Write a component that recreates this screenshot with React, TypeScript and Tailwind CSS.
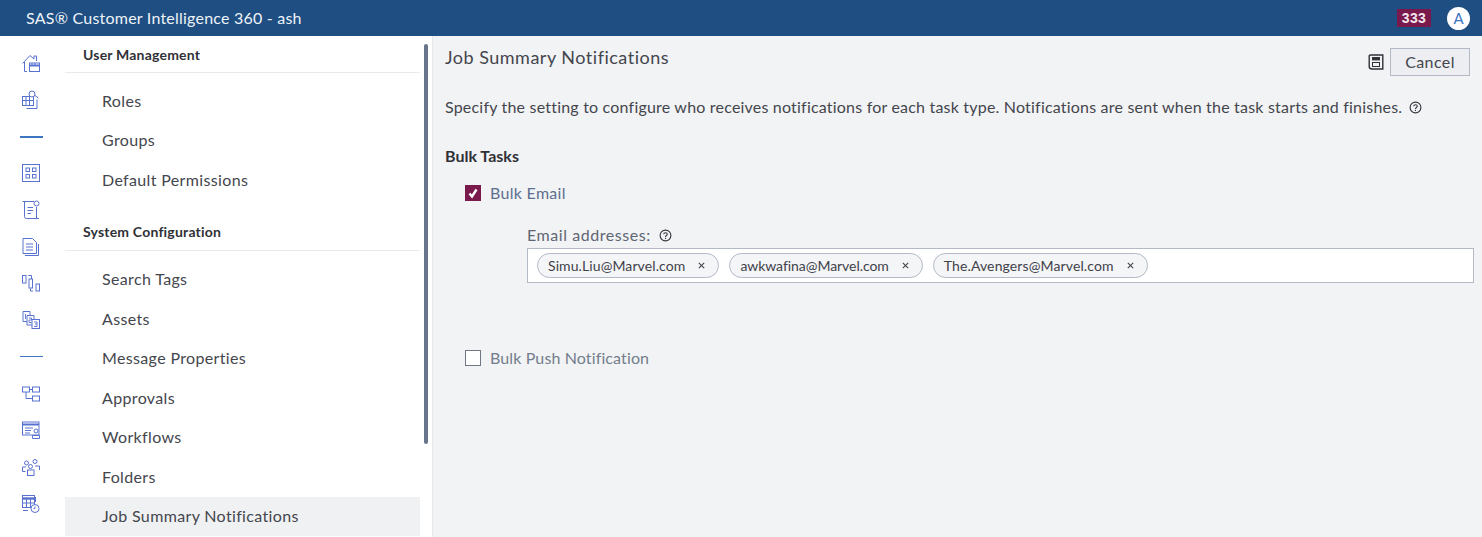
import React from "react";

const font = { fontFamily: '"Lato", "Noto Sans", sans-serif' };

function Ico({ children }: { children: React.ReactNode }) {
  return (
    <svg width="20" height="20" viewBox="0 0 20 20" fill="none" stroke="#5a72cf" strokeWidth="1" className="block">
      {children}
    </svg>
  );
}

const icons: React.ReactNode[] = [
  <Ico><path d="M1.5 10.5 L9 2.5 L13 6 V3 H15.5 V8" /><path d="M3.5 9 V18.5 H6" /><rect x="8.5" y="10" width="10" height="8.5" /><path d="M8.5 12.5 H18.5" strokeWidth="2" /><path d="M11 12.5 V10 M14 12.5 V10" /></Ico>,
  <Ico><rect x="1.5" y="6.5" width="11" height="9" /><path d="M5 6.5 V15.5 M8.5 6.5 V15.5 M1.5 10.5 H12.5" /><circle cx="11" cy="4" r="3" fill="#fff" /><path d="M14 5.5 L17.5 8 M16 9.5 V18.5 H5.5" /></Ico>,
  null,
  <Ico><rect x="1.5" y="1.5" width="17" height="17" /><rect x="5" y="5" width="3.5" height="3.5" /><rect x="11.5" y="5" width="3.5" height="3.5" /><rect x="5" y="11.5" width="3.5" height="3.5" /><rect x="11.5" y="11.5" width="3.5" height="3.5" /></Ico>,
  <Ico><path d="M1.5 1.5 H13 M3.5 1.5 V16.5 Q3.5 18.5 5.5 18.5 H18" /><path d="M15.5 7 V18" /><circle cx="15.5" cy="3.5" r="2.5" /><path d="M6.5 7.5 H12 M6.5 10.5 H12 M6.5 13.5 H10" /></Ico>,
  <Ico><path d="M2 1.5 H11.5 L15.5 5.5 V16.5 H2 Z" /><path d="M5 7 H12 M5 10 H12 M5 13 H12" /><path d="M4 18.5 H17.5 V7" /></Ico>,
  <Ico><rect x="1.5" y="2.5" width="3.5" height="7.5" /><path d="M7.5 2.5 H10.5 V6 M7.5 2.5 V3" /><rect x="8" y="6" width="3.5" height="9" /><rect x="15" y="11" width="3.5" height="7" /><path d="M9.5 18 H12 M9.5 15.5 V18" /></Ico>,
  <Ico><path d="M2 1.5 H9 V5.5 M2 1.5 V11.5 H6" /><path d="M6 5.5 H13 V9.5 M6 5.5 V15 H11" /><rect x="11" y="9.5" width="7.5" height="9" /><path d="M4.5 4 V9 M8 8 H10.5 V10 H8 V12.5 H10.5 M13 12 H16 V14 H14 M16 14 V16.5 H13" strokeWidth="0.9" /></Ico>,
  null,
  <Ico><rect x="1.5" y="3" width="7" height="5" /><rect x="11.5" y="3" width="7" height="5" /><rect x="11.5" y="12" width="7" height="5" /><path d="M8.5 5.5 H11.5 M5 8 V14.5 H11.5" /></Ico>,
  <Ico><rect x="1.5" y="2" width="16.5" height="13" /><path d="M1.5 4.5 H18" strokeWidth="2" /><path d="M4 8 H12 M4 10.5 H10 M4 13 H9" /><circle cx="15" cy="11" r="2" fill="#fff" /><path d="M11.5 18.5 V15.5 H18.5 V18.5 Z" fill="#fff" /></Ico>,
  <Ico><circle cx="5.5" cy="6" r="2" /><circle cx="14" cy="4.5" r="2" /><circle cx="9.5" cy="9.5" r="2" /><path d="M1.5 14.5 V10 H5 M18.5 13 V9 H14 M1.5 14.5 H4.5" /><rect x="6.5" y="13" width="6.5" height="5.5" /></Ico>,
  <Ico><rect x="1.5" y="1.5" width="12" height="12" /><path d="M1.5 4.5 H13.5" strokeWidth="2.4" /><path d="M5.5 4.5 V13.5 M9.5 4.5 V13.5 M1.5 9 H13.5" /><circle cx="14" cy="14.5" r="4" fill="#fff" /><path d="M14 12.5 V14.5 H12.5 M14.5 3 V8 M2 16.5 H7" /></Ico>,
];

function RailItem({ icon, index }: { icon: React.ReactNode; index: number }) {
  if (icon === null) {
    return (
      <div className="h-[36.7px] flex items-center justify-center">
        <div className={`w-[23px] bg-[#3c76c0] ${index === 2 ? "h-[2px]" : "h-px"}`} />
      </div>
    );
  }
  return <div className="h-[36.7px] flex items-center justify-center">{icon}</div>;
}

function NavItem({ label, active }: { label: string; active?: boolean }) {
  return (
    <div className={`h-[39.5px] pl-[37px] flex items-center text-[16px] tracking-[0.35px] text-[#44464d] ${active ? "bg-[#f0f1f3]" : ""}`}>
      {label}
    </div>
  );
}

function NavHeading({ label }: { label: string }) {
  return (
    <div className="h-[35px] pl-[18px] pb-[2px] flex items-center border-b border-[#e9eaed] text-[14px] tracking-[0.2px] font-bold text-[#2f3137]">
      {label}
    </div>
  );
}

function Help({ className }: { className?: string }) {
  return (
    <svg width="13" height="13" viewBox="0 0 13 13" fill="none" stroke="#33363d" strokeWidth="1.1" className={className}>
      <circle cx="6.5" cy="6.5" r="5.4" />
      <path d="M4.7 5.2 C4.7 3.2 8.3 3.2 8.3 5.2 C8.3 6.5 6.5 6.4 6.5 7.9" />
      <path d="M6.5 8.8 V10" />
    </svg>
  );
}

function Chip({ label, tracking }: { label: string; tracking: string }) {
  return (
    <div className={`h-[25px] flex items-center rounded-full border border-[#b3b9c6] bg-[#f4f5f7] pl-[10px] pr-[13px] text-[14px] text-[#3f424a] ${tracking}`}>
      <span>{label}</span>
      <span className="ml-[13px] text-[#44464d]">
        <svg width="7" height="7" viewBox="0 0 7 7" stroke="currentColor" strokeWidth="1.1"><path d="M.8.8 6.2 6.2M6.2.8.8 6.2" /></svg>
      </span>
    </div>
  );
}

export default function App() {
  return (
    <div style={font} className="h-[537px] w-[1482px] overflow-hidden flex flex-col bg-white">
      <header className="h-9 shrink-0 bg-[#1e4e82] flex items-center pl-[26px] pr-3 text-white">
        <span className="text-[16px] tracking-[0.22px] text-[#eef3f8]">SAS® Customer Intelligence 360 - ash</span>
        <div className="ml-auto flex items-center">
          <span className="h-[18px] w-[34px] bg-[#7a1a4c] flex items-center justify-center text-[14px] font-bold tracking-[0.3px] text-[#f3e6ee]" style={{ fontFamily: '"Liberation Sans", sans-serif' }}>333</span>
          <span className="ml-4 w-[23px] h-[23px] rounded-full bg-white text-[#3d74c4] flex items-center justify-center text-[15px]">A</span>
        </div>
      </header>
      <div className="flex flex-1 min-h-0">
        <aside className="w-[65px] shrink-0 pt-[9px] pr-[3px]">
          {icons.map((ic, i) => (
            <RailItem key={i} icon={ic} index={i} />
          ))}
        </aside>
        <nav className="relative w-[367px] shrink-0 pr-3 pt-[2px]">
          <div className="w-[355px]">
            <NavHeading label="User Management" />
            <div className="pt-[8px]">
              <NavItem label="Roles" />
              <NavItem label="Groups" />
              <NavItem label="Default Permissions" />
            </div>
            <div className="mt-[16px]">
              <NavHeading label="System Configuration" />
            </div>
            <div className="pt-[9px]">
              <NavItem label="Search Tags" />
              <NavItem label="Assets" />
              <NavItem label="Message Properties" />
              <NavItem label="Approvals" />
              <NavItem label="Workflows" />
              <NavItem label="Folders" />
              <NavItem label="Job Summary Notifications" active />
            </div>
          </div>
          <div className="absolute left-[359px] top-[8px] w-1 h-[400px] bg-[#68758a] rounded-sm" />
        </nav>
        <main className="flex-1 min-w-0 bg-[#f2f3f5] border-l border-[#e7e8ec] pl-[12px] pr-3">
          <div className="flex items-start justify-between pt-[10px]">
            <h1 className="text-[18px] leading-6 -mt-px tracking-[0.5px] text-[#44464d]">Job Summary Notifications</h1>
            <div className="flex items-center pt-[2px]">
              <svg width="16" height="16" viewBox="0 0 16 16" fill="none" className="mr-[6px]">
                <path d="M1.2 2.2 Q1.2 1 2.4 1 H14.8 V15 H4 Q1.2 15 1.2 12.5 Z" stroke="#2f3238" strokeWidth="1.4" />
                <rect x="4" y="3" width="8" height="3.4" fill="#2f3238" />
                <rect x="4.5" y="8.5" width="7" height="4" stroke="#2f3238" strokeWidth="1" />
              </svg>
              <button className="w-[80px] h-7 border border-[#b3b9c6] bg-[#eceef2] text-[16px] tracking-[0.4px] text-[#44464d]">Cancel</button>
            </div>
          </div>
          <p className="mt-[21px] flex items-center h-5 text-[16px] tracking-[0.2px] text-[#44464d]">
            Specify the setting to configure who receives notifications for each task type. Notifications are sent when the task starts and finishes.
            <Help className="ml-[7px]" />
          </p>
          <h2 className="mt-[29px] h-5 flex items-center text-[16px] font-bold text-[#2f3137]">Bulk Tasks</h2>
          <label className="mt-[17px] ml-[20px] h-5 flex items-center">
            <span className="w-4 h-4 bg-[#7a1a4c] flex items-center justify-center">
              <svg width="12" height="12" viewBox="0 0 12 12" fill="none" stroke="#fff" strokeWidth="2.4"><path d="M2.5 6.5 L5 9.5 L9.5 2.5" /></svg>
            </span>
            <span className="ml-[9px] text-[16px] tracking-[0.3px] text-[#5c6f8e]">Bulk Email</span>
          </label>
          <div className="ml-[82px] mt-[22px]">
            <div className="h-5 flex items-center text-[16px] tracking-[0.55px] text-[#5e6673]">
              Email addresses:
              <Help className="ml-[8px]" />
            </div>
            <div className="mt-[3px] w-[947px] h-[35px] border border-[#b3b9c6] bg-white flex items-center gap-[10px] pl-[9px]">
              <Chip label="Simu.Liu@Marvel.com" tracking="tracking-[0.1px]" />
              <Chip label="awkwafina@Marvel.com" tracking="tracking-[-0.05px]" />
              <Chip label="The.Avengers@Marvel.com" tracking="tracking-[0.12px]" />
            </div>
          </div>
          <label className="mt-[65px] ml-[20px] h-5 flex items-center">
            <span className="w-4 h-4 bg-white border border-[#6f7784]" />
            <span className="ml-[9px] text-[16px] tracking-[0.12px] text-[#737d8c]">Bulk Push Notification</span>
          </label>
        </main>
      </div>
    </div>
  );
}
